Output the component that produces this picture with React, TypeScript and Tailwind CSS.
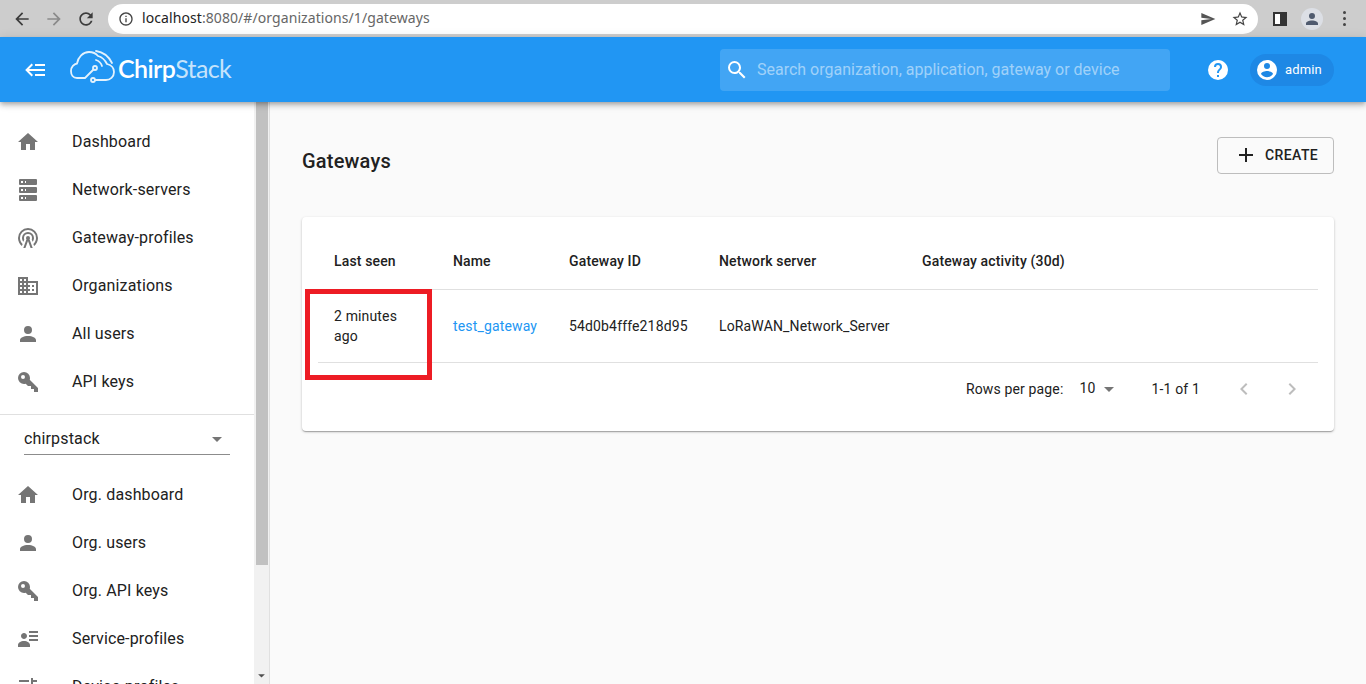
const ICONS = {
  back: 'M20 11H7.83l5.59-5.59L12 4l-8 8 8 8 1.41-1.41L7.83 13H20v-2z',
  reload:
    'M17.65 6.35C16.2 4.9 14.21 4 12 4c-4.42 0-7.99 3.58-7.99 8s3.57 8 7.99 8c3.73 0 6.84-2.55 7.73-6h-2.08c-.82 2.33-3.04 4-5.65 4-3.31 0-6-2.69-6-6s2.69-6 6-6c1.66 0 3.14.69 4.22 1.78L13 11h7V4l-2.35 2.35z',
  info: 'M11 7h2v2h-2zm0 4h2v6h-2zm1-9C6.48 2 2 6.48 2 12s4.48 10 10 10 10-4.48 10-10S17.52 2 12 2zm0 18c-4.41 0-8-3.59-8-8s3.59-8 8-8 8 3.59 8 8-3.59 8-8 8z',
  send: 'M2 21l21-9L2 3v7l15 2-15 2v7z',
  star: 'M22 9.24l-7.19-.62L12 2 9.19 8.63 2 9.24l5.46 4.73L5.82 21 12 17.27 18.18 21l-1.63-7.03L22 9.24zM12 15.4l-3.76 2.27 1-4.28-3.32-2.88 4.38-.38L12 6.1l1.71 4.04 4.38.38-3.32 2.88 1 4.28L12 15.4z',
  burger: 'M5,13L9,17L7.6,18.42L1.18,12L7.6,5.58L9,7L5,11H21V13H5M21,6V8H11V6H21M21,16V18H11V16H21Z',
  magnify:
    'M9.5,3A6.5,6.5 0 0,1 16,9.5C16,11.11 15.41,12.59 14.44,13.73L14.71,14H15.5L20.5,19L19,20.5L14,15.5V14.71L13.73,14.44C12.59,15.41 11.11,16 9.5,16A6.5,6.5 0 0,1 3,9.5A6.5,6.5 0 0,1 9.5,3M9.5,5C7,5 5,7 5,9.5C5,12 7,14 9.5,14C12,14 14,12 14,9.5C14,7 12,5 9.5,5Z',
  help: 'M15.07,11.25L14.17,12.17C13.45,12.89 13,13.5 13,15H11V14.5C11,13.39 11.45,12.39 12.17,11.67L13.41,10.41C13.78,10.05 14,9.55 14,9C14,7.89 13.1,7 12,7A2,2 0 0,0 10,9H8A4,4 0 0,1 12,5A4,4 0 0,1 16,9C16,9.88 15.64,10.67 15.07,11.25M13,19H11V17H13M12,2A10,10 0 0,0 2,12A10,10 0 0,0 12,22A10,10 0 0,0 22,12C22,6.47 17.5,2 12,2Z',
  accountCircle:
    'M12,19.2C9.5,19.2 7.29,17.92 6,16C6.03,14 10,12.9 12,12.9C14,12.9 17.97,14 18,16C16.71,17.92 14.5,19.2 12,19.2M12,5A3,3 0 0,1 15,8A3,3 0 0,1 12,11A3,3 0 0,1 9,8A3,3 0 0,1 12,5M12,2A10,10 0 0,0 2,12A10,10 0 0,0 12,22A10,10 0 0,0 22,12C22,6.47 17.5,2 12,2Z',
  home: 'M10,20V14H14V20H19V12H22L12,3L2,12H5V20H10Z',
  server:
    'M4,1H20A1,1 0 0,1 21,2V6A1,1 0 0,1 20,7H4A1,1 0 0,1 3,6V2A1,1 0 0,1 4,1M4,9H20A1,1 0 0,1 21,10V14A1,1 0 0,1 20,15H4A1,1 0 0,1 3,14V10A1,1 0 0,1 4,9M4,17H20A1,1 0 0,1 21,18V22A1,1 0 0,1 20,23H4A1,1 0 0,1 3,22V18A1,1 0 0,1 4,17M9,5H10V3H9V5M9,13H10V11H9V13M9,21H10V19H9V21M5,3V5H7V3H5M5,11V13H7V11H5M5,19V21H7V19H5Z',
  tower:
    'M12,10A2,2 0 0,1 14,12C14,12.5 13.82,12.94 13.53,13.29L16.7,22H14.57L12,14.93L9.43,22H7.3L10.47,13.29C10.18,12.94 10,12.5 10,12A2,2 0 0,1 12,10M12,8A4,4 0 0,0 8,12C8,12.5 8.1,13 8.28,13.46L7.4,15.86C6.53,14.81 6,13.47 6,12A6,6 0 0,1 12,6A6,6 0 0,1 18,12C18,13.47 17.47,14.81 16.6,15.86L15.72,13.46C15.9,13 16,12.5 16,12A4,4 0 0,0 12,8M12,4A8,8 0 0,0 4,12C4,14.36 5,16.5 6.64,17.94L5.92,19.94C3.54,18.11 2,15.23 2,12A10,10 0 0,1 12,2A10,10 0 0,1 22,12C22,15.23 20.46,18.11 18.08,19.94L17.36,17.94C19,16.5 20,14.36 20,12A8,8 0 0,0 12,4Z',
  domain:
    'M18,15H16V17H18M18,11H16V13H18M20,19H12V17H14V15H12V13H14V11H12V9H20M10,7H8V5H10M10,11H8V9H10M10,15H8V13H10M10,19H8V17H10M6,7H4V5H6M6,11H4V9H6M6,15H4V13H6M6,19H4V17H6M12,7V3H2V21H22V7H12Z',
  account:
    'M12,4A4,4 0 0,1 16,8A4,4 0 0,1 12,12A4,4 0 0,1 8,8A4,4 0 0,1 12,4M12,14C16.42,14 20,15.79 20,18V20H4V18C4,15.79 7.58,14 12,14Z',
  key: 'M22,18V22H18V19H15V16H12L9.74,13.74C9.19,13.91 8.61,14 8,14A6,6 0 0,1 2,8A6,6 0 0,1 8,2A6,6 0 0,1 14,8C14,8.61 13.91,9.19 13.74,9.74L22,18M7,5A2,2 0 0,0 5,7A2,2 0 0,0 7,9A2,2 0 0,0 9,7A2,2 0 0,0 7,5Z',
  details:
    'M11,9C11,10.66 9.66,12 8,12C6.34,12 5,10.66 5,9C5,7.34 6.34,6 8,6C9.66,6 11,7.34 11,9M14,20H2V18C2,15.79 4.69,14 8,14C11.31,14 14,15.79 14,18M22,12V14H13V12M22,8V10H13V8M22,4V6H13V4Z',
  tune: 'M3,17V19H9V17H3M3,5V7H13V5H3M13,21V19H21V17H13V15H11V21H13M7,9V11H3V13H7V15H9V9H7M21,13V11H11V13H21M15,9H17V7H21V5H17V3H15V9Z',
  plus: 'M19,13H13V19H11V13H5V11H11V5H13V11H19V13Z',
  caret: 'M7 10l5 5 5-5z',
  left: 'M15.41 7.41L14 6l-6 6 6 6 1.41-1.41L10.83 12z',
  right: 'M10 6L8.59 7.41 13.17 12l-4.58 4.59L10 18l6-6z',
};

function Icon({ d, className }: { d: string; className: string }) {
  return (
    <svg viewBox="0 0 24 24" className={className} fill="currentColor">
      <path d={d} />
    </svg>
  );
}

const TOP_MENU = [
  { label: 'Dashboard', icon: ICONS.home },
  { label: 'Network-servers', icon: ICONS.server },
  { label: 'Gateway-profiles', icon: ICONS.tower },
  { label: 'Organizations', icon: ICONS.domain },
  { label: 'All users', icon: ICONS.account },
  { label: 'API keys', icon: ICONS.key },
];

const ORG_MENU = [
  { label: 'Org. dashboard', icon: ICONS.home },
  { label: 'Org. users', icon: ICONS.account },
  { label: 'Org. API keys', icon: ICONS.key },
  { label: 'Service-profiles', icon: ICONS.details },
  { label: 'Device-profiles', icon: ICONS.tune },
];

function MenuRow({ label, icon }: { label: string; icon: string }) {
  return (
    <div className="flex h-[48px] shrink-0 items-center pl-4">
      <Icon d={icon} className="h-6 w-6 shrink-0 text-[#757575]" />
      <span className="ml-[32px] text-base tracking-[0.15px] text-[#212121]">{label}</span>
    </div>
  );
}

function BrowserBar() {
  return (
    <div className="flex h-[37px] shrink-0 items-center bg-[#cdcdcd] pl-[6px] font-['Noto_Sans',sans-serif]">
      <div className="flex w-8 justify-center"><Icon d={ICONS.back} className="h-[20px] w-[20px] text-[#3c3c3c]" /></div>
      <div className="flex w-8 justify-center"><Icon d={ICONS.back} className="h-[20px] w-[20px] rotate-180 text-[#8a8a8a]" /></div>
      <div className="flex w-8 justify-center"><Icon d={ICONS.reload} className="h-[20px] w-[20px] text-[#3c3c3c]" /></div>
      <div className="ml-[6px] flex h-[30px] w-[1150px] items-center rounded-full bg-white pl-[10px] pr-[9px]">
        <Icon d={ICONS.info} className="h-4 w-4 text-[#444]" />
        <div className="ml-2 pb-[2px] text-[14px] tracking-[0.08px] text-[#666]">
          <span className="text-[#222]">localhost</span>:8080/#/organizations/1/gateways
        </div>
        <Icon d={ICONS.send} className="ml-auto h-4 w-4 text-[#555]" />
        <Icon d={ICONS.star} className="ml-[15px] h-[18px] w-[18px] text-[#444]" />
      </div>
      <div className="ml-[6px] flex w-8 justify-center">
        <div className="flex h-[14px] w-[14px] justify-end border-2 border-[#333] bg-white">
          <div className="h-full w-[5px] bg-[#333]" />
        </div>
      </div>
      <div className="flex w-8 justify-center">
        <div className="flex h-[22px] w-[22px] items-center justify-center rounded-full bg-[#dcdfe5]">
          <Icon d={ICONS.account} className="h-[18px] w-[18px] text-[#4f5a6e]" />
        </div>
      </div>
      <div className="flex w-8 flex-col items-center gap-[3px]">
        <div className="h-[3px] w-[3px] rounded-full bg-[#444]" />
        <div className="h-[3px] w-[3px] rounded-full bg-[#444]" />
        <div className="h-[3px] w-[3px] rounded-full bg-[#444]" />
      </div>
    </div>
  );
}

function Logo() {
  return (
    <div className="flex w-[672px] items-center pl-[19px]">
      <svg viewBox="0 0 51 38" className="mb-[5px] h-[38px] w-[51px]" fill="none" stroke="#e3f2fd" strokeWidth="1.8" strokeLinecap="round">
        <path d="M26.5 21.5 L18 30 H10 C6 30 4 27 4 23 C4 19 7 16 10 15.5 C11 9 16 4 22 4 C26 4 29 5.5 31 8 C35 9 38 12 40 16 C44 17 47 20 47 24 C47 29 43 32 39 32 H28" />
        <circle cx="28" cy="20" r="2" />
        <circle cx="26" cy="32" r="2" />
        <path d="M29 3 C36 4 42 9 45 15" />
        <path d="M29 12 C32 13 34 15 35 18" />
      </svg>
      <div className="pb-[2px] font-['Lato',sans-serif] text-[25px] leading-none tracking-[-0.6px] text-white">
        <span className="font-semibold">Chirp</span>
        <span className="font-normal text-[#c5e3fb]">Stack</span>
      </div>
    </div>
  );
}

function Header() {
  return (
    <div className="relative z-10 flex h-[65px] shrink-0 items-center bg-[#2196f3] pl-[24px] shadow-[0_2px_4px_-1px_rgba(0,0,0,0.2),0_4px_5px_0_rgba(0,0,0,0.14),0_1px_10px_0_rgba(0,0,0,0.12)]">
      <Icon d={ICONS.burger} className="h-6 w-6 text-white" />
      <Logo />
      <div className="flex h-[42px] w-[450px] items-center rounded-[4px] bg-white/15 pl-[5px]">
        <Icon d={ICONS.magnify} className="h-6 w-6 text-white" />
        <span className="ml-[8px] text-base text-white/50">Search organization, application, gateway or device</span>
      </div>
      <Icon d={ICONS.help} className="ml-[36px] h-6 w-6 text-white" />
      <div className="ml-[20px] flex h-[32px] w-[84px] items-center rounded-full bg-[#1e88e5] pl-[5px]">
        <Icon d={ICONS.accountCircle} className="h-6 w-6 text-white" />
        <span className="ml-[6px] text-[13px] tracking-[0.15px] text-white">admin</span>
      </div>
    </div>
  );
}

function Sidebar() {
  return (
    <div className="flex h-full w-[270px] shrink-0 border-r border-[#e0e0e0] bg-white">
      <div className="flex min-w-0 flex-1 flex-col overflow-hidden pt-4">
        {TOP_MENU.map(item => <MenuRow key={item.label} {...item} />)}
        <div className="mt-2 h-px shrink-0 bg-[#e0e0e0]" />
        <div className="ml-6 mt-2 flex h-[32px] w-[206px] shrink-0 items-center justify-between border-b border-[#8c8c8c]">
          <span className="text-base tracking-[0.15px] text-[#212121]">chirpstack</span>
          <Icon d={ICONS.caret} className="mr-[1px] h-6 w-6 text-[#757575]" />
        </div>
        <div className="mt-4 flex flex-col">
          {ORG_MENU.map(item => <MenuRow key={item.label} {...item} />)}
        </div>
      </div>
      <div className="flex w-[15px] shrink-0 flex-col bg-[#f1f1f1]">
        <div className="ml-[2px] mr-[1px] h-[463px] bg-[#c1c1c1]" />
        <Icon d={ICONS.caret} className="ml-[1px] mt-auto mb-[2px] h-[13px] w-[13px] scale-125 text-[#505050]" />
      </div>
    </div>
  );
}

function GatewaysTable() {
  const head = 'h-[56px] pl-4 text-left text-sm font-medium tracking-[0.15px] text-[#212121]';
  const cell = 'pl-4 pr-4 py-4 text-sm leading-5 tracking-[0.15px]';
  return (
    <div className="relative mt-[43px] h-[214px] rounded-[4px] bg-white pt-4 shadow-[0_1px_3px_0_rgba(0,0,0,0.2),0_1px_1px_0_rgba(0,0,0,0.14),0_2px_1px_-1px_rgba(0,0,0,0.12)]">
      <div className="mx-4">
        <table className="w-full table-fixed border-collapse">
          <colgroup>
            <col className="w-[119px]" />
            <col className="w-[116px]" />
            <col className="w-[150px]" />
            <col className="w-[203px]" />
            <col />
          </colgroup>
          <thead>
            <tr className="border-b border-[#e0e0e0]">
              <th className={head}>Last seen</th>
              <th className={head}>Name</th>
              <th className={head}>Gateway ID</th>
              <th className={head}>Network server</th>
              <th className={head}>Gateway activity (30d)</th>
            </tr>
          </thead>
          <tbody>
            <tr className="h-[73px] border-b border-[#e0e0e0] text-[#212121]">
              <td className={cell}>2 minutes ago</td>
              <td className={`${cell} text-[#2196f3]`}>test_gateway</td>
              <td className={cell}>54d0b4fffe218d95</td>
              <td className={`${cell} whitespace-nowrap`}>LoRaWAN_Network_Server</td>
              <td className={cell} />
            </tr>
          </tbody>
        </table>
        <div className="flex h-[52px] items-center justify-end text-sm tracking-[0.15px] text-[#212121]">
          <span>Rows per page:</span>
          <span className="mb-[2px] ml-[16px] mr-[1px]">10</span>
          <Icon d={ICONS.caret} className="h-6 w-6 text-[#757575]" />
          <span className="ml-[31px]">1-1 of 1</span>
          <div className="ml-[20px] flex w-[48px] justify-center">
            <Icon d={ICONS.left} className="h-6 w-6 text-[#bdbdbd]" />
          </div>
          <div className="mr-[2px] flex w-[48px] justify-center">
            <Icon d={ICONS.right} className="h-6 w-6 text-[#bdbdbd]" />
          </div>
        </div>
      </div>
      {/* red annotation drawn over the first row */}
      <div className="absolute left-[3px] top-[72px] h-[91px] w-[127px] border-[5px] border-[#ed1c24]" />
    </div>
  );
}

export default function App() {
  return (
    <div className="flex h-screen w-full flex-col overflow-hidden font-['Roboto',sans-serif]">
      <BrowserBar />
      <Header />
      <div className="flex min-h-0 flex-1">
        <Sidebar />
        <div className="min-w-0 flex-1 bg-[#fafafa] pl-[32px] pr-[32px] pt-[35px]">
          <div className="flex h-[37px] items-center justify-between">
            <h1 className="pt-[11px] text-[20px] font-medium tracking-[0.2px] text-[#212121]">Gateways</h1>
            <div className="flex h-[37px] w-[117px] items-center rounded-[4px] border border-[#bdbdbd] pb-[2px] pl-[16px]">
              <Icon d={ICONS.plus} className="h-6 w-6 text-[#212121]" />
              <span className="ml-[7px] text-sm font-medium tracking-[0.4px] text-[#212121]">CREATE</span>
            </div>
          </div>
          <GatewaysTable />
        </div>
      </div>
    </div>
  );
}
